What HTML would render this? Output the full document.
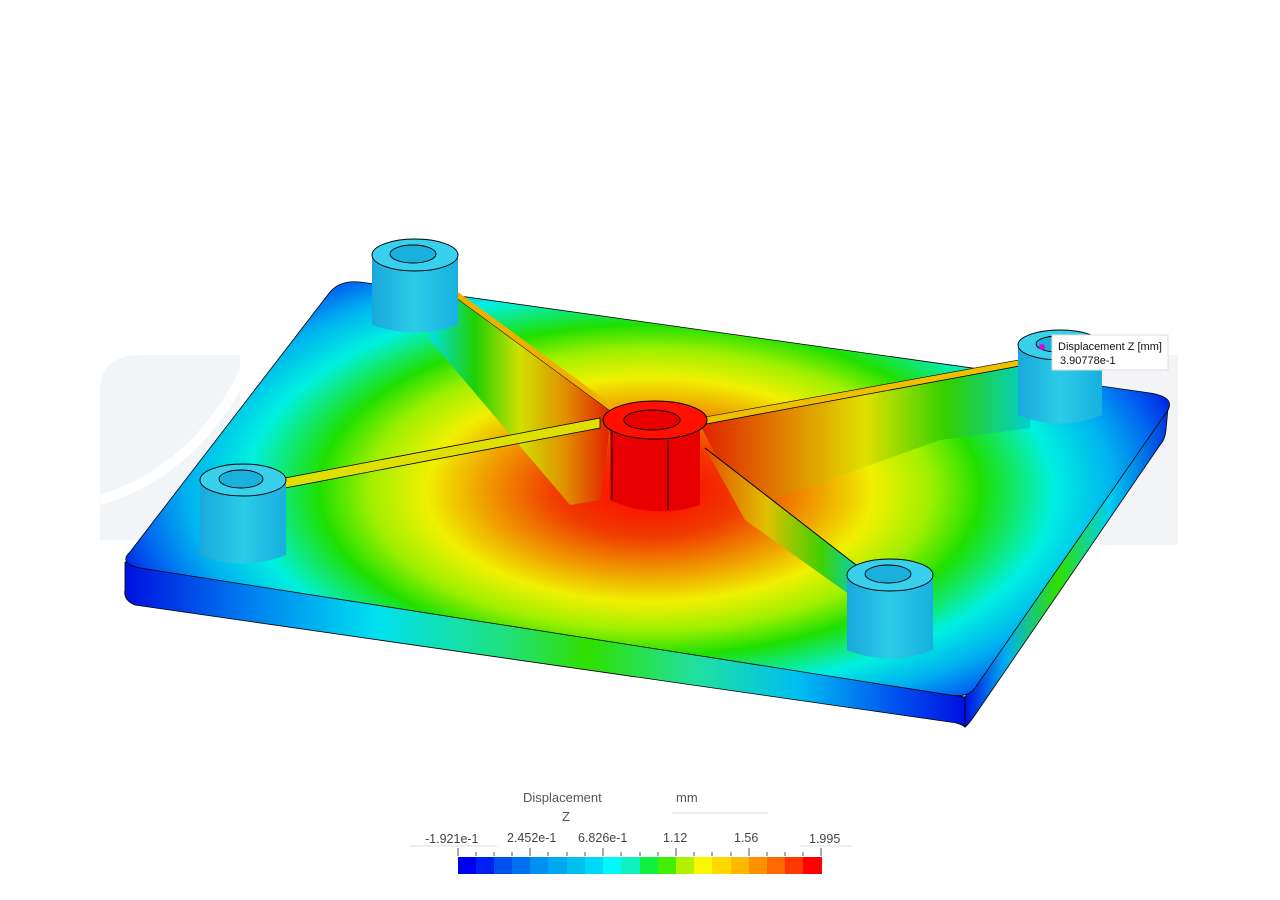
<!DOCTYPE html>
<html><head><meta charset="utf-8"><style>
html,body{margin:0;padding:0;background:#fff;width:1280px;height:900px;overflow:hidden}
svg{display:block}
text{font-family:"Liberation Sans",sans-serif}
</style></head><body>
<svg width="1280" height="900" viewBox="0 0 1280 900">
<defs>
<radialGradient id="top" gradientUnits="userSpaceOnUse" cx="650" cy="490" r="560" gradientTransform="translate(650 490) scale(1 0.5) translate(-650 -490)">
<stop offset="0" stop-color="#ff0000"/><stop offset="0.17" stop-color="#f03c00"/>
<stop offset="0.3" stop-color="#f0a000"/><stop offset="0.4" stop-color="#f0f000"/>
<stop offset="0.5" stop-color="#a0f000"/><stop offset="0.59" stop-color="#20e000"/>
<stop offset="0.72" stop-color="#00f0e0"/><stop offset="0.83" stop-color="#00b0f0"/>
<stop offset="0.92" stop-color="#0060f0"/><stop offset="1" stop-color="#0010e0"/>
</radialGradient>
<linearGradient id="front" gradientUnits="userSpaceOnUse" x1="125" y1="0" x2="965" y2="0">
<stop offset="0" stop-color="#0010e0"/><stop offset="0.15" stop-color="#0080f0"/>
<stop offset="0.3" stop-color="#00e0f0"/><stop offset="0.45" stop-color="#20e080"/>
<stop offset="0.55" stop-color="#30e000"/><stop offset="0.68" stop-color="#20e0a0"/>
<stop offset="0.8" stop-color="#00c0f0"/><stop offset="0.92" stop-color="#0050f0"/>
<stop offset="1" stop-color="#0010e0"/></linearGradient>
<linearGradient id="right" gradientUnits="userSpaceOnUse" x1="965" y1="0" x2="1170" y2="0">
<stop offset="0" stop-color="#0010e0"/><stop offset="0.2" stop-color="#00b0f0"/>
<stop offset="0.45" stop-color="#30e000"/><stop offset="0.7" stop-color="#00d0f0"/>
<stop offset="1" stop-color="#0030e0"/></linearGradient>
<linearGradient id="wA" gradientUnits="userSpaceOnUse" x1="430" y1="0" x2="610" y2="0">
<stop offset="0" stop-color="#00e0e0"/><stop offset="0.25" stop-color="#20d000"/>
<stop offset="0.5" stop-color="#d0e000"/><stop offset="0.75" stop-color="#e09000"/>
<stop offset="1" stop-color="#e02000"/></linearGradient>
<linearGradient id="wB" gradientUnits="userSpaceOnUse" x1="700" y1="0" x2="1030" y2="0">
<stop offset="0" stop-color="#e02000"/><stop offset="0.25" stop-color="#e08000"/>
<stop offset="0.5" stop-color="#e0e000"/><stop offset="0.75" stop-color="#30d000"/>
<stop offset="1" stop-color="#00d0d0"/></linearGradient>
<linearGradient id="wC" gradientUnits="userSpaceOnUse" x1="705" y1="0" x2="860" y2="0">
<stop offset="0" stop-color="#e05000"/><stop offset="0.4" stop-color="#e0c000"/>
<stop offset="0.75" stop-color="#40d000"/><stop offset="1" stop-color="#00d0c0"/></linearGradient>
<linearGradient id="cyl" x1="0" y1="0" x2="1" y2="0">
<stop offset="0" stop-color="#1aa8dc"/><stop offset="0.5" stop-color="#2ccbe8"/><stop offset="1" stop-color="#18b0e0"/></linearGradient>
</defs>
<path d="M100 540 V390 Q100 355 140 355 H240 L240 540 Z" fill="#f2f5f7"/>
<path d="M100 500 Q200 470 250 360" stroke="#fff" stroke-width="10" fill="none"/>
<path d="M1100 355 H1178 V545 H1100 Z" fill="#f2f4f6"/>
<path d="M125 562 L965 697 L965 727 Q960 723 950 722 L135 605 Q123 600 125 590 Z" fill="url(#front)" stroke="#000" stroke-width="0.8"/>
<path d="M965 697 L1168 408 L1166 430 Q1165 440 1160 445 L975 715 Q968 725 965 727 Z" fill="url(#right)" stroke="#000" stroke-width="0.8"/>
<path d="M130 552 L330 292 Q340 280 360 282 L1150 393 Q1175 397 1168 410 L975 688 Q968 698 950 695 L140 568 Q118 563 130 552 Z" fill="url(#top)" stroke="#000" stroke-width="0.8"/>
<path d="M428 277 L612 412 L600 500 L570 505 L430 340 Z" fill="url(#wA)"/>
<path d="M428 277 L612 412" stroke="#000" stroke-width="1"/>
<path d="M700 425 L1030 364 L1030 428 L940 440 L745 510 Z" fill="url(#wB)"/>
<path d="M700 425 L1030 364" stroke="#000" stroke-width="1"/>
<path d="M705 448 L860 568 L850 595 L745 520 Z" fill="url(#wC)"/>
<path d="M705 448 L860 568" stroke="#000" stroke-width="1"/>
<path d="M285 478 L600 418 L600 428 L285 488 Z" fill="#e0e000" stroke="#000" stroke-width="0.8"/>
<path d="M428 270 L612 405 L612 412 L428 277 Z" fill="#f0b000"/>
<path d="M700 418 L1030 358 L1030 364 L700 425 Z" fill="#f0c000" stroke="#000" stroke-width="0.6"/>
<path d="M610 425 L700 428 L700 505 Q655 520 610 500 Z" fill="#e80000"/>
<path d="M612 430 L612 500 M668 440 L668 510" stroke="#000" stroke-width="1"/>
<ellipse cx="655" cy="420" rx="52" ry="19" fill="#ff1000" stroke="#000" stroke-width="1"/>
<ellipse cx="652" cy="420" rx="28" ry="10" fill="#e80000" stroke="#000" stroke-width="1"/>
<g stroke="#000" stroke-width="0.9">
<path d="M372 255 V325 Q415 340 458 325 V255 Z" fill="url(#cyl)" stroke="none"/>
<ellipse cx="415" cy="255" rx="43" ry="16" fill="#38d0ec"/><ellipse cx="413" cy="254" rx="23" ry="9" fill="#1ab0dc"/>
<path d="M1018 345 V415 Q1060 432 1102 415 V345 Z" fill="url(#cyl)" stroke="none"/>
<ellipse cx="1060" cy="345" rx="42" ry="15" fill="#38d0ec"/><ellipse cx="1058" cy="344" rx="22" ry="8" fill="#1ab0dc"/>
<path d="M200 480 V555 Q243 572 286 555 V480 Z" fill="url(#cyl)" stroke="none"/>
<ellipse cx="243" cy="480" rx="43" ry="16" fill="#38d0ec"/><ellipse cx="241" cy="479" rx="22" ry="9" fill="#1ab0dc"/>
<path d="M847 575 V650 Q890 667 933 650 V575 Z" fill="url(#cyl)" stroke="none"/>
<ellipse cx="890" cy="575" rx="43" ry="16" fill="#38d0ec"/><ellipse cx="888" cy="574" rx="23" ry="9" fill="#1ab0dc"/>
</g>
<circle cx="1042" cy="347" r="3" fill="#e000e0"/>
<rect x="1052" y="335" width="116" height="35" fill="#fff" stroke="#ddd"/>
<text x="1058" y="350" font-size="11" fill="#111">Displacement Z [mm]</text>
<text x="1060" y="364" font-size="11" fill="#111">3.90778e-1</text>
<text x="523" y="802" font-size="13" fill="#555">Displacement</text>
<text x="676" y="802" font-size="13" fill="#555">mm</text>
<line x1="672" y1="813" x2="768" y2="813" stroke="#ddd"/>
<text x="562" y="821" font-size="13" fill="#555">Z</text>
<g font-size="12.5" fill="#444">
<text x="425" y="843">-1.921e-1</text><text x="507" y="842">2.452e-1</text>
<text x="578" y="842">6.826e-1</text><text x="663" y="842">1.12</text>
<text x="734" y="842">1.56</text><text x="809" y="843">1.995</text></g>
<line x1="410" y1="846" x2="497" y2="846" stroke="#ddd"/><line x1="800" y1="846" x2="852" y2="846" stroke="#ddd"/>
<g stroke="#555" stroke-width="1">
<path d="M458 848V856M476 852V856M494 852V856M512 852V856M530 848V856M548 852V856M567 852V856M585 852V856M603 848V856M621 852V856M640 852V856M658 852V856M676 848V856M694 852V856M712 852V856M731 852V856M749 848V856M767 852V856M785 852V856M803 852V856M821 848V856"/></g>
<g>
<rect x="458" y="857" width="19" height="17" fill="#0000f0"/><rect x="476" y="857" width="19" height="17" fill="#0020f0"/>
<rect x="494" y="857" width="19" height="17" fill="#0050f0"/><rect x="512" y="857" width="19" height="17" fill="#0070f0"/>
<rect x="530" y="857" width="19" height="17" fill="#0090f0"/><rect x="548" y="857" width="19" height="17" fill="#00a8f0"/>
<rect x="567" y="857" width="19" height="17" fill="#00c0f0"/><rect x="585" y="857" width="19" height="17" fill="#00d8f8"/>
<rect x="603" y="857" width="19" height="17" fill="#00f8ff"/><rect x="621" y="857" width="19" height="17" fill="#10f0c0"/>
<rect x="640" y="857" width="19" height="17" fill="#10f040"/><rect x="658" y="857" width="19" height="17" fill="#40f000"/>
<rect x="676" y="857" width="19" height="17" fill="#b0f000"/><rect x="694" y="857" width="19" height="17" fill="#f8f800"/>
<rect x="712" y="857" width="19" height="17" fill="#ffd800"/><rect x="731" y="857" width="19" height="17" fill="#ffb800"/>
<rect x="749" y="857" width="19" height="17" fill="#ff9000"/><rect x="767" y="857" width="19" height="17" fill="#ff6800"/>
<rect x="785" y="857" width="19" height="17" fill="#ff3800"/><rect x="803" y="857" width="19" height="17" fill="#ff0000"/>
</g>
</svg>
</body></html>
